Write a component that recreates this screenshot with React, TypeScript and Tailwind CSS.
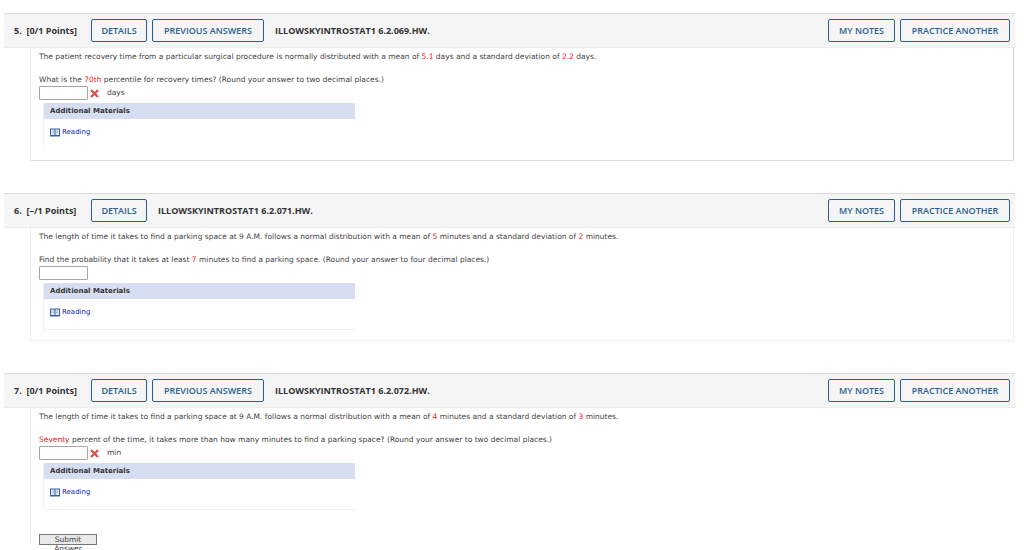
import React from 'react';

const Red = ({ children }: { children: React.ReactNode }) => (
  <span className="text-[#e8201c]">{children}</span>
);

const HeaderButton = ({ label, className }: { label: string; className: string }) => (
  <button className={`flex h-[23px] items-center justify-center rounded-[2px] border border-[#2c5f8f] text-[9px] font-semibold text-[#2c5f8f] ${className}`}>
    {label}
  </button>
);

const BookIcon = () => (
  <svg width="10" height="9" viewBox="0 0 10 9" className="shrink-0">
    <rect x="0" y="0.5" width="10" height="8" fill="#39639a" />
    <path d="M1 1.5h3.5v5.5H1zM5.5 1.5H9v5.5H5.5z" fill="#dfe8f2" />
    <path d="M2 3h2M2 4.5h2M6 3h2M6 4.5h2" stroke="#8aa2c0" strokeWidth="0.6" />
  </svg>
);

const XMark = () => (
  <svg width="9" height="9" viewBox="0 0 9 9" className="shrink-0">
    <path d="M1 1l7 7M8 1l-7 7" stroke="#d9534f" strokeWidth="2.4" />
  </svg>
);

const Materials = ({ closed }: { closed?: boolean }) => (
  <div className={`ml-[4px] w-[312px] border-l border-[#eef0f8] ${closed ? 'border-b pb-[12px]' : 'pb-[10px]'}`}>
    <div className="flex h-[16px] items-center bg-[#d7def2] pl-[6px] text-[7px] font-bold text-[#333]">
      Additional Materials
    </div>
    <div className="mt-[8px] flex items-center gap-[2px] pl-[6px] text-[7px] text-[#0a1fb4]">
      <BookIcon />
      <span>Reading</span>
    </div>
  </div>
);

type QuestionProps = {
  num: string;
  points: string;
  previous?: boolean;
  code: string;
  text: React.ReactNode;
  ask: React.ReactNode;
  unit?: string;
  gap: string;
  bodyHeight: string;
  bodyClass?: string;
  children?: React.ReactNode;
};

const Question = ({ num, points, previous, code, text, ask, unit, gap, bodyHeight, bodyClass, children }: QuestionProps) => (
  <section>
    <header className="flex h-[35px] items-center border-y border-t-[#dcdcdc] border-b-[#ececec] bg-[#f5f5f5] pr-[5px] pl-[10px] [font-family:'Open_Sans',sans-serif]">
      <div className="w-[77px] text-[9px] font-bold whitespace-pre text-[#333]">{num}  {points}</div>
      <div className="flex items-center gap-[5px]">
        <HeaderButton label="DETAILS" className="w-[56px]" />
        {previous && <HeaderButton label="PREVIOUS ANSWERS" className="w-[112px]" />}
      </div>
      <div className="ml-[11px] text-[9px] font-bold text-[#333]">{code}</div>
      <div className="ml-auto flex items-center gap-[5px]">
        <HeaderButton label="MY NOTES" className="w-[67px]" />
        <HeaderButton label="PRACTICE ANOTHER" className="w-[110px]" />
      </div>
    </header>
    <div className={`ml-[26px] mr-[1px] border-l border-[#eeeeee] pl-[8px] text-[7.5px] leading-[10px] text-[#444] [font-family:'DejaVu_Sans',sans-serif] ${bodyHeight} ${bodyClass ?? ''}`}>
      <p className="pt-[4px]">{text}</p>
      <p className="mt-[13px]">{ask}</p>
      <div className={`flex items-center gap-[2px] ${gap}`}>
        <div className="h-[14px] w-[49px] rounded-[1px] border border-[#a6a6a6] bg-white" />
        {unit && (
          <>
            <XMark />
            <span className="ml-[6px]">{unit}</span>
          </>
        )}
      </div>
      {children}
    </div>
  </section>
);

export default function App() {
  return (
    <main className="flex h-[550px] w-[1024px] flex-col gap-[32px] overflow-hidden bg-white pt-[13px] pr-[9px] pl-[4px]">
      <Question
        num="5."
        points="[0/1 Points]"
        previous
        code="ILLOWSKYINTROSTAT1 6.2.069.HW."
        text={<>The patient recovery time from a particular surgical procedure is normally distributed with a mean of <Red>5.1</Red> days and a standard deviation of <Red>2.2</Red> days.</>}
        ask={<>What is the <Red>70th</Red> percentile for recovery times? (Round your answer to two decimal places.)</>}
        unit="days"
        gap="mt-[1px] mb-[3px]"
        bodyHeight="h-[113px]"
        bodyClass="border-r border-b border-r-[#cccccc] border-b-[#dddddd]"
      >
        <Materials />
      </Question>
      <Question
        num="6."
        points="[–/1 Points]"
        code="ILLOWSKYINTROSTAT1 6.2.071.HW."
        text={<>The length of time it takes to find a parking space at 9 A.M. follows a normal distribution with a mean of <Red>5</Red> minutes and a standard deviation of <Red>2</Red> minutes.</>}
        ask={<>Find the probability that it takes at least <Red>7</Red> minutes to find a parking space. (Round your answer to four decimal places.)</>}
        gap="mt-[1px] mb-[3px]"
        bodyHeight="h-[113px]"
        bodyClass="border-r border-b border-[#eeeeee]"
      >
        <Materials closed />
      </Question>
      <Question
        num="7."
        points="[0/1 Points]"
        previous
        code="ILLOWSKYINTROSTAT1 6.2.072.HW."
        text={<>The length of time it takes to find a parking space at 9 A.M. follows a normal distribution with a mean of <Red>4</Red> minutes and a standard deviation of <Red>3</Red> minutes.</>}
        ask={<><Red>Seventy</Red> percent of the time, it takes more than how many minutes to find a parking space? (Round your answer to two decimal places.)</>}
        unit="min"
        gap="mt-[1px] mb-[3px]"
        bodyHeight="h-[136px]"
      >
        <Materials closed />
        <div className="mt-[24px]">
          <button className="h-[11px] w-[58px] border border-[#767676] bg-[#e9e9e9] text-[7.5px] leading-[9px] text-[#444]">Submit Answer</button>
        </div>
      </Question>
    </main>
  );
}
